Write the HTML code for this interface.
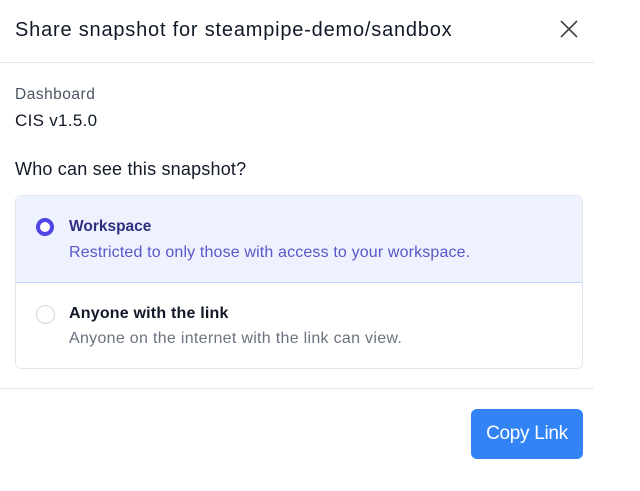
<!DOCTYPE html>
<html><head><style>
body{margin:0;width:640px;height:491px;background:#fff;font-family:"Liberation Sans",sans-serif;position:relative;overflow:hidden;color:#111827}
.a{position:absolute;white-space:nowrap}
</style></head><body>
<div class="a" style="left:15px;top:19px;font-size:20px;color:#111827;letter-spacing:0.8px">Share snapshot for steampipe-demo/sandbox</div>
<svg class="a" style="left:559px;top:19px" width="20" height="20" viewBox="0 0 20 20"><path d="M2 2L18 18M18 2L2 18" stroke="#444" stroke-width="1.6"/></svg>
<div class="a" style="left:0;top:62px;width:594px;height:1px;background:#e5e7eb"></div>
<div class="a" style="left:15px;top:86px;font-size:15.5px;color:#4b5563;letter-spacing:0.5px">Dashboard</div>
<div class="a" style="left:15px;top:111px;font-size:17px;color:#111827;letter-spacing:0.3px">CIS v1.5.0</div>
<div class="a" style="left:15px;top:159px;font-size:18px;color:#111827;letter-spacing:0.2px">Who can see this snapshot?</div>
<div class="a" style="left:15px;top:195px;width:566px;height:172px;border:1px solid #e5e7eb;border-radius:6px;overflow:hidden">
 <div style="position:absolute;left:0;top:0;width:566px;height:86px;background:#eef2ff;border-bottom:1px solid #c7d2fe"></div>
</div>
<div class="a" style="left:36px;top:218px;width:10px;height:10px;border:4.5px solid #4f46e5;border-radius:50%;background:#fff"></div>
<div class="a" style="left:69px;top:218px;font-size:15.5px;font-weight:bold;color:#312e81;letter-spacing:0px">Workspace</div>
<div class="a" style="left:69px;top:244px;font-size:16px;color:#5b55c9;letter-spacing:0.15px">Restricted to only those with access to your workspace.</div>
<div class="a" style="left:36px;top:305px;width:17px;height:17px;border:1px solid #d1d5db;border-radius:50%;background:#fff"></div>
<div class="a" style="left:69px;top:305px;font-size:16px;font-weight:bold;color:#111827;letter-spacing:0.2px">Anyone with the link</div>
<div class="a" style="left:69px;top:330px;font-size:16px;color:#6b7280;letter-spacing:0.3px">Anyone on the internet with the link can view.</div>
<div class="a" style="left:0;top:388px;width:594px;height:1px;background:#e5e7eb"></div>
<div class="a" style="left:471px;top:409px;width:112px;height:50px;background:#3284f6;border-radius:6px;color:#fff;font-size:19px;line-height:50px;text-align:center;letter-spacing:-0.3px">Copy Link</div>
</body></html>
